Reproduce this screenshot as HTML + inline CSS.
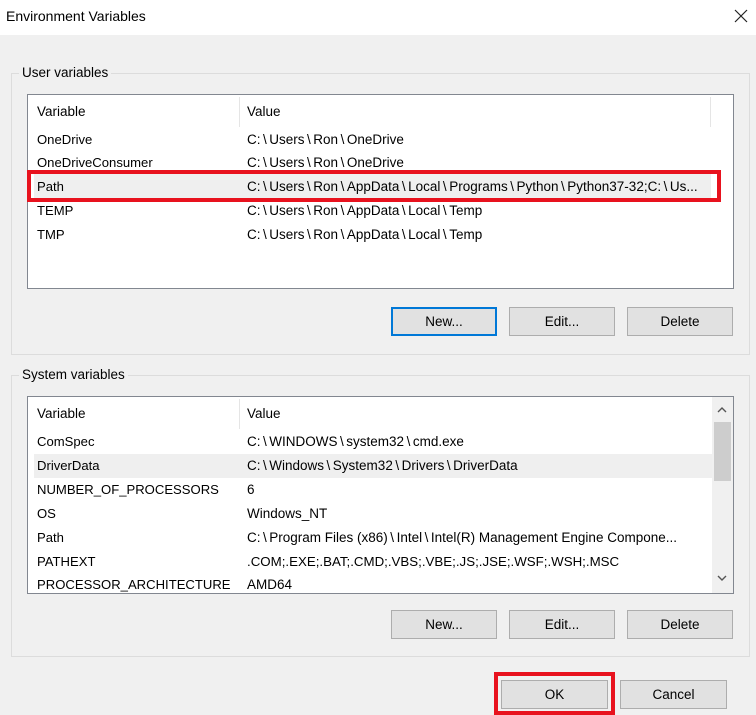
<!DOCTYPE html>
<html><head><style>
*{margin:0;padding:0;box-sizing:border-box}
body{width:756px;height:715px;background:#f0f0f0;position:relative;overflow:hidden;font-family:"Liberation Sans",sans-serif;font-size:13.5px;color:#000}
.a{position:absolute;white-space:nowrap}
b{font-weight:normal;padding:0 2.5px}
.n{font-size:13.1px}
.title{left:0;top:0;width:756px;height:35px;background:#fff}
.grp{border:1px solid #dcdcdc}
.lbl{background:#f0f0f0;padding:0 3px}
.list{background:#fff;border:1px solid #828790;overflow:hidden}
.btn{background:#e1e1e1;border:1px solid #adadad;text-align:center;line-height:27px}
.red{border:4px solid #e8121e}
</style></head><body>
<div class="a title"></div>
<div class="a" style="left:6px;top:8px;font-size:14px">Environment Variables</div>
<svg class="a" style="left:734px;top:9px" width="14" height="14"><path d="M1 1L13 13M13 1L1 13" stroke="#222" stroke-width="1.2"/></svg>

<div class="a grp" style="left:11px;top:73px;width:739px;height:282px"></div>
<div class="a lbl" style="left:19px;top:65px">User variables</div>
<div class="a list" style="left:27px;top:94px;width:707px;height:195px">
<div class="a" style="left:211px;top:2px;width:1px;height:30px;background:#e5e5e5"></div>
<div class="a" style="left:682px;top:2px;width:1px;height:30px;background:#e5e5e5"></div>
<div class="a" style="left:6px;top:79px;width:677px;height:24px;background:#efefef"></div>
<div class="a" style="left:9px;top:9px">Variable</div><div class="a" style="left:219px;top:9px">Value</div>
<div class="a n" style="left:9px;top:37px">OneDrive</div><div class="a" style="left:219px;top:37px">C:<b>\</b>Users<b>\</b>Ron<b>\</b>OneDrive</div>
<div class="a n" style="left:9px;top:60px">OneDriveConsumer</div><div class="a" style="left:219px;top:60px">C:<b>\</b>Users<b>\</b>Ron<b>\</b>OneDrive</div>
<div class="a n" style="left:9px;top:84px">Path</div><div class="a" style="left:219px;top:84px">C:<b>\</b>Users<b>\</b>Ron<b>\</b>AppData<b>\</b>Local<b>\</b>Programs<b>\</b>Python<b>\</b>Python37-32;C:<b>\</b>Us...</div>
<div class="a n" style="left:9px;top:108px">TEMP</div><div class="a" style="left:219px;top:108px">C:<b>\</b>Users<b>\</b>Ron<b>\</b>AppData<b>\</b>Local<b>\</b>Temp</div>
<div class="a n" style="left:9px;top:132px">TMP</div><div class="a" style="left:219px;top:132px">C:<b>\</b>Users<b>\</b>Ron<b>\</b>AppData<b>\</b>Local<b>\</b>Temp</div>
</div>
<div class="a red" style="left:27px;top:170px;width:694px;height:32px"></div>
<div class="a btn" style="left:391px;top:307px;width:106px;height:29px;border:2px solid #0078d7;line-height:25px">New...</div>
<div class="a btn" style="left:509px;top:307px;width:106px;height:29px">Edit...</div>
<div class="a btn" style="left:627px;top:307px;width:106px;height:29px">Delete</div>

<div class="a grp" style="left:11px;top:375px;width:739px;height:282px"></div>
<div class="a lbl" style="left:19px;top:367px">System variables</div>
<div class="a list" style="left:27px;top:396px;width:707px;height:198px">
<div class="a" style="left:211px;top:2px;width:1px;height:30px;background:#e5e5e5"></div>
<div class="a" style="left:6px;top:57px;width:678px;height:24px;background:#efefef"></div>
<div class="a" style="left:9px;top:9px">Variable</div><div class="a" style="left:219px;top:9px">Value</div>
<div class="a n" style="left:9px;top:37px">ComSpec</div><div class="a" style="left:219px;top:37px">C:<b>\</b>WINDOWS<b>\</b>system32<b>\</b>cmd.exe</div>
<div class="a n" style="left:9px;top:61px">DriverData</div><div class="a" style="left:219px;top:61px">C:<b>\</b>Windows<b>\</b>System32<b>\</b>Drivers<b>\</b>DriverData</div>
<div class="a n" style="left:9px;top:85px">NUMBER_OF_PROCESSORS</div><div class="a" style="left:219px;top:85px">6</div>
<div class="a n" style="left:9px;top:109px">OS</div><div class="a" style="left:219px;top:109px">Windows_NT</div>
<div class="a n" style="left:9px;top:133px">Path</div><div class="a" style="left:219px;top:133px">C:<b>\</b>Program Files (x86)<b>\</b>Intel<b>\</b>Intel(R) Management Engine Compone...</div>
<div class="a n" style="left:9px;top:157px">PATHEXT</div><div class="a" style="left:219px;top:157px;font-size:13.3px">.COM;.EXE;.BAT;.CMD;.VBS;.VBE;.JS;.JSE;.WSF;.WSH;.MSC</div>
<div class="a n" style="left:9px;top:180px">PROCESSOR_ARCHITECTURE</div><div class="a" style="left:219px;top:180px">AMD64</div>
<div class="a" style="left:684px;top:0;width:21px;height:196px;background:#f0f0f0"></div>
<div class="a" style="left:686px;top:25px;width:17px;height:59px;background:#cdcdcd"></div>
<svg class="a" style="left:689px;top:9px" width="10" height="7"><path d="M1 6L5 2L9 6" stroke="#555" stroke-width="1.4" fill="none"/></svg>
<svg class="a" style="left:689px;top:178px" width="10" height="7"><path d="M1 1L5 5L9 1" stroke="#555" stroke-width="1.4" fill="none"/></svg>
</div>
<div class="a btn" style="left:391px;top:610px;width:106px;height:29px">New...</div>
<div class="a btn" style="left:509px;top:610px;width:106px;height:29px">Edit...</div>
<div class="a btn" style="left:627px;top:610px;width:106px;height:29px">Delete</div>

<div class="a btn" style="left:501px;top:680px;width:107px;height:29px">OK</div>
<div class="a red" style="left:494px;top:672px;width:121px;height:43px"></div>
<div class="a btn" style="left:620px;top:680px;width:107px;height:29px">Cancel</div>
</body></html>
